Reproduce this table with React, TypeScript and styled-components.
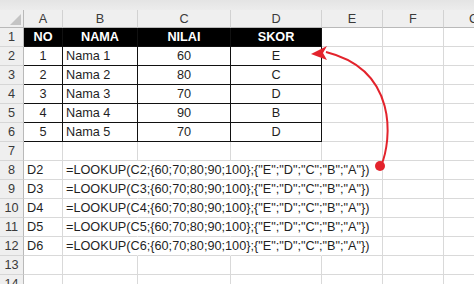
import * as React from "react";
import styled, { createGlobalStyle } from "styled-components";

const GlobalStyle = createGlobalStyle`
  html, body {
    margin: 0;
    padding: 0;
    background: #ffffff;
    overflow: hidden;
  }
  * {
    box-sizing: border-box;
  }
`;

const Sheet = styled.div`
  position: relative;
  width: 474px;
  height: 284px;
  overflow: hidden;
  background: #ffffff;
  font-family: "Liberation Sans", Arial, sans-serif;
  font-size: 12.7px;
  color: #1f1f1f;
`;

const TopStrip = styled.div`
  height: 10px;
  background: linear-gradient(#e4e4e4, #ececec);
`;

const Grid = styled.div`
  display: grid;
  grid-template-columns: 24px 39px 75px 93px 91px 61px 61px 61px;
  grid-template-rows: 18px repeat(14, 19px);
  width: 505px;
`;

const Corner = styled.div`
  position: relative;
  background: #efefef;
  border-right: 1px solid #b9b9b9;
  border-bottom: 1px solid #b9b9b9;

  &::after {
    content: "";
    position: absolute;
    right: 2px;
    bottom: 2px;
    width: 0;
    height: 0;
    border-left: 11px solid transparent;
    border-bottom: 11px solid #c4c4c4;
  }
`;

const ColHead = styled.div`
  display: flex;
  align-items: center;
  justify-content: center;
  background: #efefef;
  color: #3a3a3a;
  border-right: 1px solid #d2d2d2;
  border-bottom: 1px solid #b9b9b9;
`;

const RowHead = styled.div`
  display: flex;
  align-items: center;
  justify-content: center;
  background: #efefef;
  color: #3a3a3a;
  border-right: 1px solid #b9b9b9;
  border-bottom: 1px solid #d6d6d6;
`;

type CellProps = {
  $align?: "left" | "center";
  $table?: boolean;
  $head?: boolean;
  $spill?: boolean;
  $covered?: boolean;
};

const Cell = styled.div<CellProps>`
  position: relative;
  display: flex;
  align-items: center;
  justify-content: ${(p) => (p.$align === "center" ? "center" : "flex-start")};
  padding: 0 3px;
  white-space: nowrap;
  overflow: ${(p) => (p.$spill ? "visible" : "hidden")};
  z-index: ${(p) => (p.$spill ? 1 : 0)};
  background: ${(p) => (p.$head ? "#000000" : "transparent")};
  color: ${(p) => (p.$head ? "#ffffff" : "#1f1f1f")};
  font-weight: ${(p) => (p.$head ? 700 : 400)};
  border-right: 1px solid
    ${(p) => (p.$table ? "#111111" : p.$spill || p.$covered ? "transparent" : "#d9d9d9")};
  border-bottom: 1px solid ${(p) => (p.$table ? "#111111" : "#d9d9d9")};
`;

const Arrow = styled.svg`
  position: absolute;
  top: 0;
  left: 0;
  pointer-events: none;
  z-index: 2;
`;

const columns = ["A", "B", "C", "D", "E", "F", "G"];

const table = [
  ["NO", "NAMA", "NILAI", "SKOR"],
  ["1", "Nama 1", "60", "E"],
  ["2", "Nama 2", "80", "C"],
  ["3", "Nama 3", "70", "D"],
  ["4", "Nama 4", "90", "B"],
  ["5", "Nama 5", "70", "D"],
];

const formula = (c: string) =>
  `=LOOKUP(${c};{60;70;80;90;100};{"E";"D";"C";"B";"A"})`;

const formulas = [
  ["D2", "C2"],
  ["D3", "C3"],
  ["D4", "C4"],
  ["D5", "C5"],
  ["D6", "C6"],
];

const tableAlign: ("left" | "center")[] = ["center", "left", "center", "center"];

function renderRow(r: number) {
  const cells: React.ReactNode[] = [<RowHead key={`h${r}`}>{r}</RowHead>];

  if (r <= 6) {
    const data = table[r - 1];
    data.forEach((v, i) => {
      cells.push(
        <Cell
          key={`${r}-${i}`}
          $table
          $head={r === 1}
          $align={r === 1 ? "center" : tableAlign[i]}
        >
          {v}
        </Cell>
      );
    });
    for (let i = 4; i < 7; i++) cells.push(<Cell key={`${r}-${i}`} />);
    return cells;
  }

  if (r >= 8 && r <= 12) {
    const [label, ref] = formulas[r - 8];
    cells.push(<Cell key={`${r}-0`}>{label}</Cell>);
    cells.push(
      <Cell key={`${r}-1`} $spill>
        {formula(ref)}
      </Cell>
    );
    cells.push(<Cell key={`${r}-2`} $covered />);
    cells.push(<Cell key={`${r}-3`} $covered />);
    for (let i = 4; i < 7; i++) cells.push(<Cell key={`${r}-${i}`} />);
    return cells;
  }

  for (let i = 0; i < 7; i++) cells.push(<Cell key={`${r}-${i}`} />);
  return cells;
}

export default function App() {
  const rows = Array.from({ length: 14 }, (_, i) => i + 1);

  return (
    <Sheet>
      <GlobalStyle />
      <TopStrip />
      <Grid>
        <Corner />
        {columns.map((c) => (
          <ColHead key={c}>{c}</ColHead>
        ))}
        {rows.map((r) => renderRow(r))}
      </Grid>
      <Arrow width={474} height={284} viewBox="0 0 474 284">
        <path
          d="M381 166 C392 140 398 70 326 52"
          fill="none"
          stroke="#e3232c"
          strokeWidth={2}
        />
        <polygon points="311,54 327,46 323,53 327,60" fill="#e3232c" />
        <circle cx={380} cy={166} r={5} fill="#e3232c" />
      </Arrow>
    </Sheet>
  );
}
